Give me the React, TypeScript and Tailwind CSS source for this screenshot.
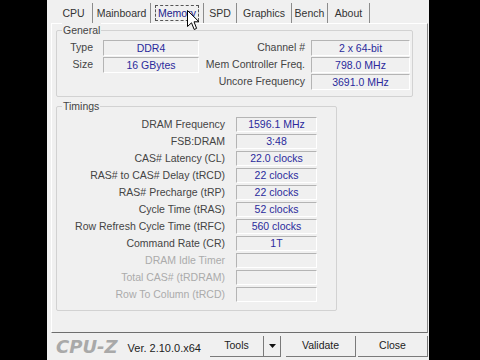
import React from 'react';

const font = { fontFamily: '"Liberation Sans", Arial, sans-serif' };

const tabs = [
  { name: 'CPU', w: 'w-[38px]' },
  { name: 'Mainboard', w: 'w-[58px]' },
  { name: 'Memory', w: 'w-[53px]', active: true },
  { name: 'SPD', w: 'w-[33px]' },
  { name: 'Graphics', w: 'w-[55px]' },
  { name: 'Bench', w: 'w-[36px]' },
  { name: 'About', w: 'w-[42px]' },
];

const timings: { label: string; value: string; disabled?: boolean }[] = [
  { label: 'DRAM Frequency', value: '1596.1 MHz' },
  { label: 'FSB:DRAM', value: '3:48' },
  { label: 'CAS# Latency (CL)', value: '22.0 clocks' },
  { label: 'RAS# to CAS# Delay (tRCD)', value: '22 clocks' },
  { label: 'RAS# Precharge (tRP)', value: '22 clocks' },
  { label: 'Cycle Time (tRAS)', value: '52 clocks' },
  { label: 'Row Refresh Cycle Time (tRFC)', value: '560 clocks' },
  { label: 'Command Rate (CR)', value: '1T' },
  { label: 'DRAM Idle Timer', value: '', disabled: true },
  { label: 'Total CAS# (tRDRAM)', value: '', disabled: true },
  { label: 'Row To Column (tRCD)', value: '', disabled: true },
];

function ValueBox({ value, className }: { value: string; className: string }) {
  return (
    <div
      className={`${className} flex items-center justify-center border border-t-[#b4b4b4] border-l-[#b4b4b4] border-b-white border-r-white bg-[#f0f0f0] text-[10.5px] text-[#2a2a9c] leading-none`}
    >
      {value}
    </div>
  );
}

function GroupBox({ title, className, children }: { title: string; className: string; children: React.ReactNode }) {
  return (
    <div className={`relative border border-[#d2d2d2] rounded-[2px] ${className}`}>
      {/* group caption sits over the frame */}
      <span className="absolute -top-[8px] left-[5px] bg-[#f0f0f0] px-[1px] text-[10.5px] text-[#444] leading-[14px]">
        {title}
      </span>
      {children}
    </div>
  );
}

function Cursor() {
  return (
    <svg className="absolute left-[140px] top-[10px]" width="13" height="21" viewBox="0 0 13 21">
      <path d="M0.5 0.5 L0.5 16.5 L4.5 12.8 L7.2 19.5 L9.6 18.4 L7 11.8 L12 11.8 Z" fill="white" stroke="black" strokeWidth="1" />
    </svg>
  );
}

export default function App() {
  return (
    <div className="w-[480px] h-[360px] bg-black flex overflow-hidden" style={font}>
      <div className="ml-[47px] w-[382px] h-full bg-[#f0f0f0] relative flex flex-col text-[#222]">
        {/* Tabs */}
        <div className="h-[23px] pt-[3px] pl-[8px] flex items-stretch">
          {tabs.map((t) => (
            <div
              key={t.name}
              className={`${t.w} flex items-center justify-center border-r border-[#8c8c8c] text-[10.5px] leading-none`}
            >
              {t.active ? (
                <span className="border border-dashed border-[#555] px-[2px] py-[2px] text-[#1a1a8c]">{t.name}</span>
              ) : (
                <span className="text-[#333]">{t.name}</span>
              )}
            </div>
          ))}
        </div>

        {/* Tab panel */}
        <div className="ml-[4px] w-[377px] h-[310px] border-t border-l border-t-white border-l-white border-r border-b border-r-[#8a8a8a] border-b-[#6e6e6e] pl-[4px] pt-[6px]">
          <GroupBox title="General" className="w-[357px] h-[67px] pt-[9px] flex">
            <div className="flex flex-col gap-[1px]">
              {[
                ['Type', 'DDR4'],
                ['Size', '16 GBytes'],
              ].map(([l, v]) => (
                <div key={l} className="flex items-center h-[16px]">
                  <span className="w-[36px] text-right text-[10.5px] text-[#444]">{l}</span>
                  <ValueBox value={v} className="ml-[10px] w-[96px] h-[16px]" />
                </div>
              ))}
            </div>
            <div className="flex flex-col gap-[1px]">
              {[
                ['Channel #', '2 x 64-bit'],
                ['Mem Controller Freq.', '798.0 MHz'],
                ['Uncore Frequency', '3691.0 MHz'],
              ].map(([l, v]) => (
                <div key={l} className="flex items-center h-[16px]">
                  <span className="w-[106px] text-right text-[10.5px] text-[#444] whitespace-nowrap">{l}</span>
                  <ValueBox value={v} className="ml-[6px] w-[99px] h-[16px]" />
                </div>
              ))}
            </div>
          </GroupBox>

          <GroupBox title="Timings" className="mt-[9px] w-[281px] h-[205px] pt-[10px] flex flex-col gap-[2px]">
            {timings.map((t) => (
              <div key={t.label} className="flex items-center h-[15px]">
                <span
                  className={`w-[168px] text-right text-[10.5px] whitespace-nowrap ${t.disabled ? 'text-[#ababab]' : 'text-[#444]'}`}
                >
                  {t.label}
                </span>
                <ValueBox value={t.value} className="ml-[11px] w-[81px] h-[15px]" />
              </div>
            ))}
          </GroupBox>
        </div>

        {/* Footer */}
        <div className="flex items-start pt-[3px]">
          <span className="ml-[9px] mt-[1px] text-[18px] font-bold italic text-[#a9a9a9] leading-[20px]" style={{ fontFamily: '"DejaVu Sans", sans-serif' }}>
            CPU-Z
          </span>
          <span className="ml-[10px] mt-[7px] text-[11px] text-[#222] leading-none">Ver. 2.10.0.x64</span>
          <div className="ml-auto mr-[1px] flex items-stretch h-[21px]">
            <div className="w-[54px] flex items-center justify-center border-b border-r border-[#7a7a7a] text-[10.5px]">Tools</div>
            <div className="w-[17px] flex items-center justify-center border-b border-r border-[#7a7a7a]">
              <svg width="7" height="4" viewBox="0 0 7 4">
                <path d="M0 0 H7 L3.5 4 Z" fill="#111" />
              </svg>
            </div>
            <div className="ml-[5px] w-[70px] flex items-center justify-center border-b border-r border-[#7a7a7a] text-[10.5px]">Validate</div>
            <div className="ml-[2px] w-[70px] flex items-center justify-center border-b border-r border-[#7a7a7a] text-[10.5px]">Close</div>
          </div>
        </div>

        <Cursor />
      </div>
    </div>
  );
}
